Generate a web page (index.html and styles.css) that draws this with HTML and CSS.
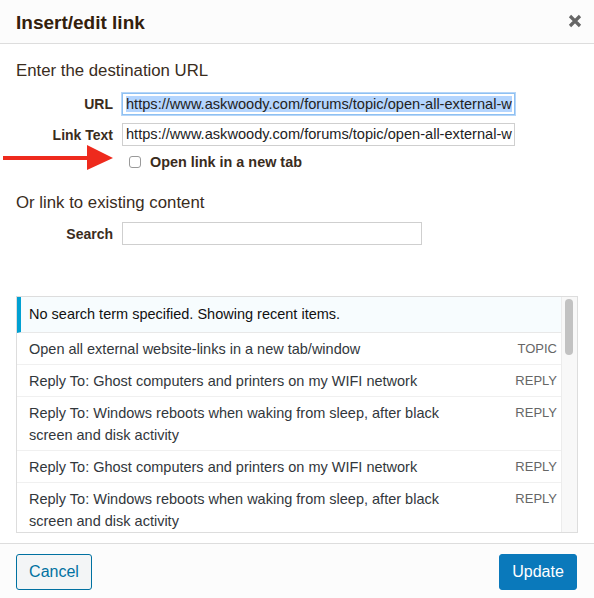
FILE: index.html
```html
<!DOCTYPE html>
<html>
<head>
<meta charset="utf-8">
<link rel="stylesheet" href="styles.css">
</head>
<body>
<div class="dialog">
  <div class="header">
    <h1 class="title">Insert/edit link</h1>
    <span class="close">
      <svg width="14" height="14" viewBox="0 0 14 14"><path d="M2 2 L12 12 M12 2 L2 12" stroke="#666" stroke-width="3.2" stroke-linecap="butt"/></svg>
    </span>
  </div>
  <div class="body">
    <p class="section">Enter the destination URL</p>
    <div class="field url-row">
      <label class="lbl">URL</label>
      <div class="input focused"><span class="sel">https://www.askwoody.com/forums/topic/open-all-external-w</span></div>
    </div>
    <div class="field">
      <label class="lbl">Link Text</label>
      <div class="input">https://www.askwoody.com/forums/topic/open-all-external-w</div>
    </div>
    <div class="check-row">
      <span class="checkbox"></span>
      <span class="check-label">Open link in a new tab</span>
    </div>
    <p class="section section2">Or link to existing content</p>
    <div class="field search-row">
      <label class="lbl">Search</label>
      <div class="input search"></div>
    </div>
    <div class="results">
      <div class="items">
        <div class="notice">No search term specified. Showing recent items.</div>
        <div class="item"><span class="item-title">Open all external website-links in a new tab/window</span><span class="item-type">TOPIC</span></div>
        <div class="item"><span class="item-title">Reply To: Ghost computers and printers on my WIFI network</span><span class="item-type">REPLY</span></div>
        <div class="item"><span class="item-title">Reply To: Windows reboots when waking from sleep, after black screen and disk activity</span><span class="item-type">REPLY</span></div>
        <div class="item"><span class="item-title">Reply To: Ghost computers and printers on my WIFI network</span><span class="item-type">REPLY</span></div>
        <div class="item last"><span class="item-title">Reply To: Windows reboots when waking from sleep, after black screen and disk activity</span><span class="item-type">REPLY</span></div>
      </div>
      <div class="scrollbar"><div class="thumb"></div></div>
    </div>
  </div>
  <div class="footer">
    <button class="btn cancel">Cancel</button>
    <button class="btn update">Update</button>
  </div>
  <svg class="arrow" width="112" height="26" viewBox="0 0 112 26"><path d="M0 11 L84 11 L84 0 L110 13 L84 25 L84 15 L0 15 Z" fill="#ee2a1d"/></svg>
</div>
</body>
</html>
```
FILE: styles.css
```css
* { box-sizing: border-box; }
html, body { margin: 0; padding: 0; }
body {
  width: 594px;
  height: 598px;
  background: #fff;
  font-family: "Liberation Sans", Arial, Helvetica, sans-serif;
  overflow: hidden;
}
.dialog {
  position: relative;
  width: 594px;
  height: 598px;
  display: flex;
  flex-direction: column;
}
.header {
  height: 44px;
  background: #fcfcfc;
  border-bottom: 1px solid #dddddd;
  display: flex;
  align-items: center;
  justify-content: space-between;
  padding: 3px 12px 0 16px;
}
.title {
  margin: 0;
  font-size: 19px;
  font-weight: bold;
  color: #33200c;
}
.close { display: flex; margin-top: -4px; }
.body {
  flex: 1;
  padding: 0 16px;
  display: flex;
  flex-direction: column;
}
.section {
  margin: 17px 0 0 0;
  font-size: 16.8px;
  line-height: 20px;
  color: #3a2c1d;
}
.section2 { margin-top: 25px; }
.field {
  display: flex;
  align-items: center;
  margin-top: 8px;
}
.url-row { margin-top: 12px; }
.search-row { margin-top: 9px; }
.lbl {
  width: 97px;
  text-align: right;
  font-size: 14px;
  font-weight: bold;
  color: #3a2c1d;
  margin-right: 9px;
}
.input {
  width: 393px;
  height: 23px;
  border: 1px solid #cfcfcf;
  font-size: 14.6px;
  line-height: 21px;
  padding: 0 3px;
  color: #222;
  white-space: nowrap;
  overflow: hidden;
  background: #fff;
}
.input.focused {
  height: 22px;
  border: 1px solid #8ec0f2;
  box-shadow: 0 0 0 1px #b6d6f8;
  line-height: 20px;
}
.sel { background: #b4d5fe; }
.input.search { width: 300px; }
.check-row {
  display: flex;
  align-items: center;
  margin-top: 10px;
  padding-left: 113px;
  height: 12px;
}
.checkbox {
  width: 12px;
  height: 12px;
  border: 1px solid #9a9a9a;
  border-radius: 3px;
  background: #fff;
  margin-right: 9px;
}
.check-label {
  font-size: 14.4px;
  font-weight: bold;
  color: #3a2c1d;
}
.results {
  margin-top: 51px;
  height: 237px;
  border: 1px solid #dddddd;
  display: flex;
  overflow: hidden;
}
.items {
  flex: 1;
  overflow: hidden;
}
.notice {
  height: 36px;
  background: #f7fcfe;
  border-left: 4px solid #00a0d2;
  border-bottom: 1px solid #e8e8e8;
  padding: 0 0 0 8px;
  font-size: 14.5px;
  line-height: 35px;
  color: #111;
}
.item {
  display: flex;
  justify-content: space-between;
  align-items: flex-start;
  padding: 5px 4px 4px 12px;
  border-bottom: 1px solid #f0f0f0;
  font-size: 14.5px;
  line-height: 22px;
  color: #32373c;
}
.item.last { padding-bottom: 0; border-bottom: none; }
.item-title { width: 430px; }
.item-type {
  font-size: 13px;
  color: #666;
}
.scrollbar {
  width: 16px;
  background: #f8f8f8;
  border-left: 1px solid #ececec;
  padding: 2px 3px 0 3px;
}
.thumb {
  width: 8px;
  height: 56px;
  border-radius: 4px;
  background: #c2c2c2;
}
.footer {
  height: 55px;
  margin-top: 10px;
  background: #fcfcfc;
  border-top: 1px solid #dddddd;
  display: flex;
  justify-content: space-between;
  align-items: flex-start;
  padding: 10px 17px 0 16px;
}
.btn {
  height: 36px;
  font-family: "Liberation Sans", Arial, sans-serif;
  font-size: 16px;
  border-radius: 3px;
  padding: 0;
  text-align: center;
  cursor: pointer;
}
.cancel {
  width: 76px;
  background: #f3f5f6;
  border: 1px solid #0071a1;
  color: #0071a1;
}
.update {
  width: 78px;
  background: #0a79bb;
  border: 1px solid #0a79bb;
  color: #fff;
}
.arrow {
  position: absolute;
  left: 3px;
  top: 145px;
}
```
